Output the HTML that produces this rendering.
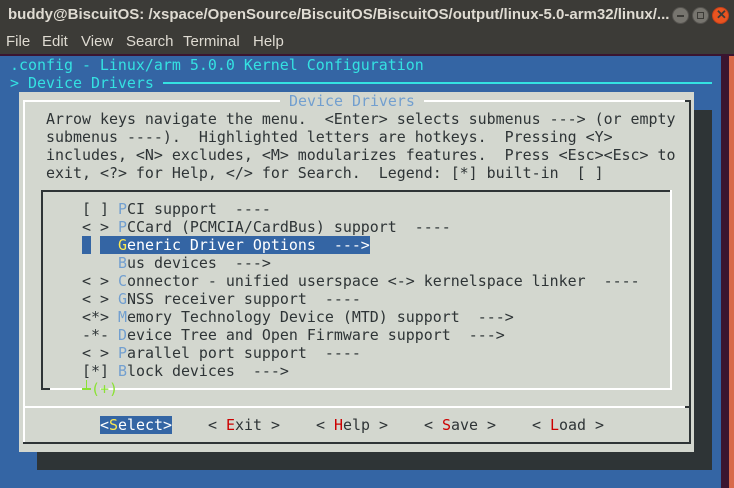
<!DOCTYPE html>
<html><head><meta charset="utf-8"><style>
*{margin:0;padding:0}
body{width:734px;height:488px;overflow:hidden;background:#3c3b37;position:relative;font-family:"DejaVu Sans Mono","Liberation Mono",monospace;font-size:14.95px}
.a{position:absolute}
.t{position:absolute;white-space:pre;line-height:18px;height:18px;color:#2e3436}
.c{color:#34e2e2}
.h{color:#729fcf}
.y{color:#fce94f}
.r{color:#cc0000}
.w{color:#fff}
.g{color:#8ae234}
.m{position:absolute;top:33px;font-family:'Liberation Sans',sans-serif;font-size:15px;color:#dfdbd2;white-space:pre}
.btn{position:absolute;top:7px;width:17px;height:17px;border-radius:50%;background:#77756f;border:1px solid #55534f;box-sizing:border-box}
</style></head><body>
<div class="a" style="left:0;top:0;width:734px;height:54px;background:#3c3b37"></div>
<div class="a" style="left:8px;top:6px;font-family:'Liberation Sans',sans-serif;font-size:15px;font-weight:bold;color:#dfdbd2;white-space:nowrap">buddy@BiscuitOS: /xspace/OpenSource/BiscuitOS/BiscuitOS/output/linux-5.0-arm32/linux/...</div>
<div class="btn" style="left:672px"><div class="a" style="left:4px;top:7px;width:7px;height:2px;background:#3c3b37"></div></div>
<div class="btn" style="left:692px"><div class="a" style="left:4px;top:4px;width:7px;height:7px;border:1px solid #3c3b37;box-sizing:border-box"></div></div>
<div class="btn" style="left:712px;background:#e95420;border-color:#c4401a"><div class="a" style="left:3px;top:-1px;color:#3c3b37;font:bold 13px 'Liberation Sans',sans-serif">✕</div></div>
<div class="m" style="left:6px">File</div>
<div class="m" style="left:42px">Edit</div>
<div class="m" style="left:81px">View</div>
<div class="m" style="left:126px">Search</div>
<div class="m" style="left:183px">Terminal</div>
<div class="m" style="left:253px">Help</div>
<div class="a" style="left:0;top:54px;width:734px;height:434px;background:#3a1530"></div>
<div class="a" style="left:0;top:56px;width:721px;height:432px;background:#3465a4"></div>
<div class="a" style="left:729px;top:56px;width:5px;height:432px;background:#d86a4a"></div>
<div class="t c" style="left:10px;top:56px">.config - Linux/arm 5.0.0 Kernel Configuration</div>
<div class="t c" style="left:10px;top:74px">&gt; Device Drivers</div>
<div class="a" style="left:163px;top:82px;width:549px;height:2px;background:#34e2e2"></div>
<div class="a" style="left:37px;top:110px;width:675px;height:360px;background:#2e3436"></div>
<div class="a" style="left:19px;top:92px;width:675px;height:360px;background:#d3d7cf"></div>
<div class="a" style="left:23px;top:100px;width:667px;height:2px;background:#fff"></div>
<div class="a" style="left:23px;top:100px;width:2px;height:343px;background:#fff"></div>
<div class="a" style="left:689px;top:100px;width:2px;height:344px;background:#2e3436"></div>
<div class="a" style="left:23px;top:442px;width:668px;height:2px;background:#2e3436"></div>
<div class="a" style="left:685px;top:100px;width:5px;height:2px;background:#2e3436"></div>
<div class="t h" style="left:280px;top:92px;background:#d3d7cf;padding:0 9px">Device Drivers</div>
<div class="t" style="left:46px;top:110px">Arrow keys navigate the menu.  &lt;Enter&gt; selects submenus ---&gt; (or empty</div>
<div class="t" style="left:46px;top:128px">submenus ----).  Highlighted letters are hotkeys.  Pressing &lt;Y&gt;</div>
<div class="t" style="left:46px;top:146px">includes, &lt;N&gt; excludes, &lt;M&gt; modularizes features.  Press &lt;Esc&gt;&lt;Esc&gt; to</div>
<div class="t" style="left:46px;top:164px">exit, &lt;?&gt; for Help, &lt;/&gt; for Search.  Legend: [*] built-in  [ ]</div>
<div class="a" style="left:41px;top:190px;width:631px;height:2px;background:#2e3436"></div>
<div class="a" style="left:41px;top:190px;width:2px;height:199px;background:#2e3436"></div>
<div class="a" style="left:41px;top:388px;width:9px;height:2px;background:#2e3436"></div>
<div class="a" style="left:50px;top:388px;width:622px;height:2px;background:#fff"></div>
<div class="a" style="left:670px;top:190px;width:2px;height:200px;background:#fff"></div>
<div class="a" style="left:82px;top:236px;width:288px;height:18px;background:#3465a4"></div>
<div class="a" style="left:91px;top:236px;width:9px;height:18px;background:#d3d7cf"></div>
<div class="t" style="left:82px;top:200px">[ ] <span class="h">P</span>CI support  ----</div>
<div class="t" style="left:82px;top:218px">&lt; &gt; <span class="h">P</span>CCard (PCMCIA/CardBus) support  ----</div>
<div class="t w" style="left:82px;top:236px">    <span class="y">G</span>eneric Driver Options  ---&gt;</div>
<div class="t" style="left:82px;top:254px">    <span class="h">B</span>us devices  ---&gt;</div>
<div class="t" style="left:82px;top:272px">&lt; &gt; <span class="h">C</span>onnector - unified userspace &lt;-&gt; kernelspace linker  ----</div>
<div class="t" style="left:82px;top:290px">&lt; &gt; <span class="h">G</span>NSS receiver support  ----</div>
<div class="t" style="left:82px;top:308px">&lt;*&gt; <span class="h">M</span>emory Technology Device (MTD) support  ---&gt;</div>
<div class="t" style="left:82px;top:326px">-*- <span class="h">D</span>evice Tree and Open Firmware support  ---&gt;</div>
<div class="t" style="left:82px;top:344px">&lt; &gt; <span class="h">P</span>arallel port support  ----</div>
<div class="t" style="left:82px;top:362px">[*] <span class="h">B</span>lock devices  ---&gt;</div>
<div class="a" style="left:82px;top:380px;width:18px;height:18px;background:#d3d7cf"></div>
<div class="a" style="left:86px;top:380px;width:1px;height:9px;background:#8ae234"></div>
<div class="a" style="left:82px;top:388px;width:9px;height:2px;background:#8ae234"></div>
<div class="t g" style="left:91px;top:380px">(+)</div>
<div class="a" style="left:23px;top:406px;width:667px;height:2px;background:#fff"></div>
<div class="a" style="left:685px;top:406px;width:5px;height:2px;background:#2e3436"></div>
<div class="t w" style="left:100px;top:416px;background:#3465a4">&lt;<span class="y">S</span>elect&gt;</div>
<div class="t" style="left:208px;top:416px">&lt; <span class="r">E</span>xit &gt;</div>
<div class="t" style="left:316px;top:416px">&lt; <span class="r">H</span>elp &gt;</div>
<div class="t" style="left:424px;top:416px">&lt; <span class="r">S</span>ave &gt;</div>
<div class="t" style="left:532px;top:416px">&lt; <span class="r">L</span>oad &gt;</div>
</body></html>
